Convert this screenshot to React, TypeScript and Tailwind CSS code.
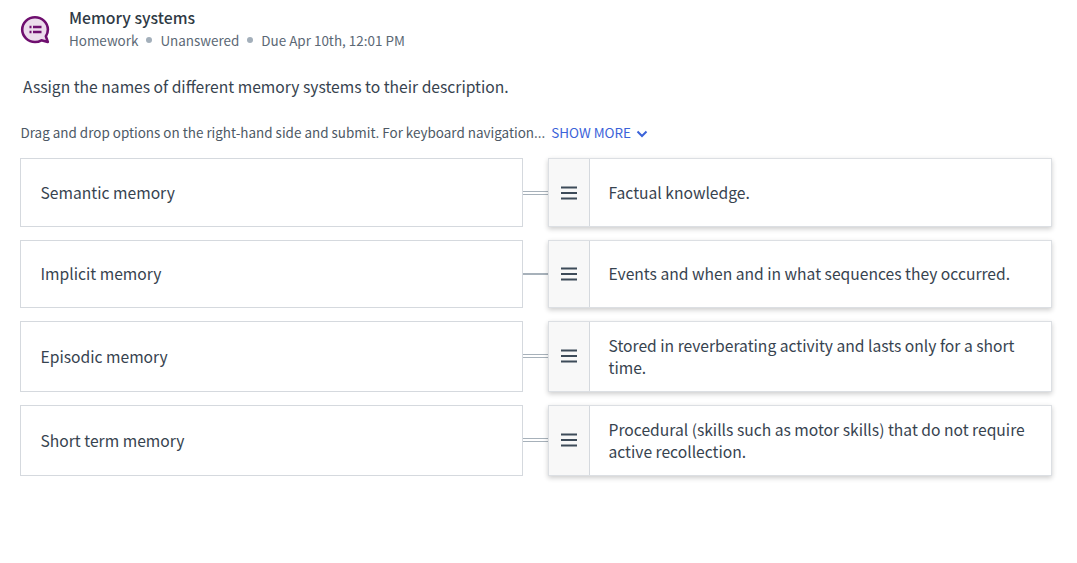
const font = "font-['Noto_Sans_CJK_SC','Source_Sans_Pro',sans-serif]";

function Handle() {
  return (
    <svg width="18" height="14" viewBox="0 0 18 14" aria-hidden="true">
      <path d="M1 1.500h16M1 7h16M1 12.500h16" stroke="#3d4b59" strokeWidth="2" fill="none" />
    </svg>
  );
}

const rows = [
  { left: "Semantic memory", right: "Factual knowledge.", h: "h-[69px]", mb: "mb-[13px]", solid: false, hp: "pb-0" },
  { left: "Implicit memory", right: "Events and when and in what sequences they occurred.", h: "h-[68px]", mb: "mb-[13px]", solid: true, hp: "pb-0" },
  { left: "Episodic memory", right: "Stored in reverberating activity and lasts only for a short time.", h: "h-[71px]", mb: "mb-[13px]", solid: false, hp: "pb-[1px]" },
  { left: "Short term memory", right: "Procedural (skills such as motor skills) that do not require active recollection.", h: "h-[71px]", mb: "mb-0", solid: false, hp: "pb-[1px]" },
];

export default function App() {
  return (
    <div className={`${font} w-[1077px] h-[563px] bg-white text-[#37434f] overflow-hidden`}>
      <header className="flex pl-[20px] pt-[8px]">
        <svg width="30" height="30" viewBox="0 0 30 30" className="mt-[6.500px]" aria-hidden="true">
          <path d="M15 2.2C8 2.2 2.2 7.8 2.2 14.6S8 27 15 27c2.400 0 4.500-.6 6.400-1.700L27.800 27l-1.900-5.700c1.300-2 2-4.300 2-6.700C27.900 7.800 22 2.200 15 2.200z" fill="#ecdcec" stroke="#6f0f6f" strokeWidth="2.600" strokeLinejoin="round" />
          <path d="M13 12h8.500M13 17h8.500" stroke="#6f0f6f" strokeWidth="2.400" />
          <path d="M9.500 12h2M9.500 17h2" stroke="#6f0f6f" strokeWidth="2.400" />
        </svg>
        <div className="ml-[19px]">
          <h1 className="text-[15.75px] leading-[20px] font-medium text-[#2f3a45]">Memory systems</h1>
          <div className="flex items-center mt-[2px] text-[13.45px] leading-[20px] text-[#5b6875]">
            <span>Homework</span>
            <span className="mx-[8px] w-[6px] h-[6px] rounded-full bg-[#a3afba]" />
            <span>Unanswered</span>
            <span className="mx-[8px] w-[6px] h-[6px] rounded-full bg-[#a3afba]" />
            <span>Due Apr 10th, 12:01 PM</span>
          </div>
        </div>
      </header>
      <p className="ml-[23px] mt-[25px] text-[15.65px] leading-[24px]">Assign the names of different memory systems to their description.</p>
      <div className="flex items-center ml-[20.500px] mt-[23px] text-[13.45px] leading-[20px] text-[#4d5965]">
        <span>Drag and drop options on the right-hand side and submit. For keyboard navigation...</span>
        <span className="ml-[6px] text-[#3b63d9]">SHOW MORE</span>
        <svg width="12" height="8" viewBox="0 0 12 8" className="ml-[5px] mt-[3px]" aria-hidden="true">
          <path d="M1.500 1.500L6 6l4.500-4.500" stroke="#3b63d9" strokeWidth="2" fill="none" />
        </svg>
      </div>
      <div className="mt-[16px] ml-[20px] w-[1032px]">
        {rows.map((r) => (
          <div key={r.left} className={`flex items-stretch ${r.h} ${r.mb}`}>
            <div className="w-[503px] border border-[#d5d9de] flex items-center pl-[19.500px] text-[15.65px]">{r.left}</div>
            <div className={`w-[25px] flex items-center ${r.hp}`}>
              {r.solid ? (
                <div className="w-full h-[2px] bg-[#a7b1ba]" />
              ) : (
                <div className="w-full h-[4px] border-y border-[#a7b1ba]" />
              )}
            </div>
            <div className="flex-1 flex bg-white border border-[#dcdfe3] shadow-[0_2px_5px_rgba(0,0,0,0.2)]">
              <div className={`w-[41px] shrink-0 bg-[#f8f8f8] border-r border-[#d5d9de] flex items-center justify-center ${r.hp}`}>
                <Handle />
              </div>
              <div className="flex-1 flex items-center pl-[18.500px] pr-[20px] text-[15.65px] leading-[22px]">{r.right}</div>
            </div>
          </div>
        ))}
      </div>
    </div>
  );
}
